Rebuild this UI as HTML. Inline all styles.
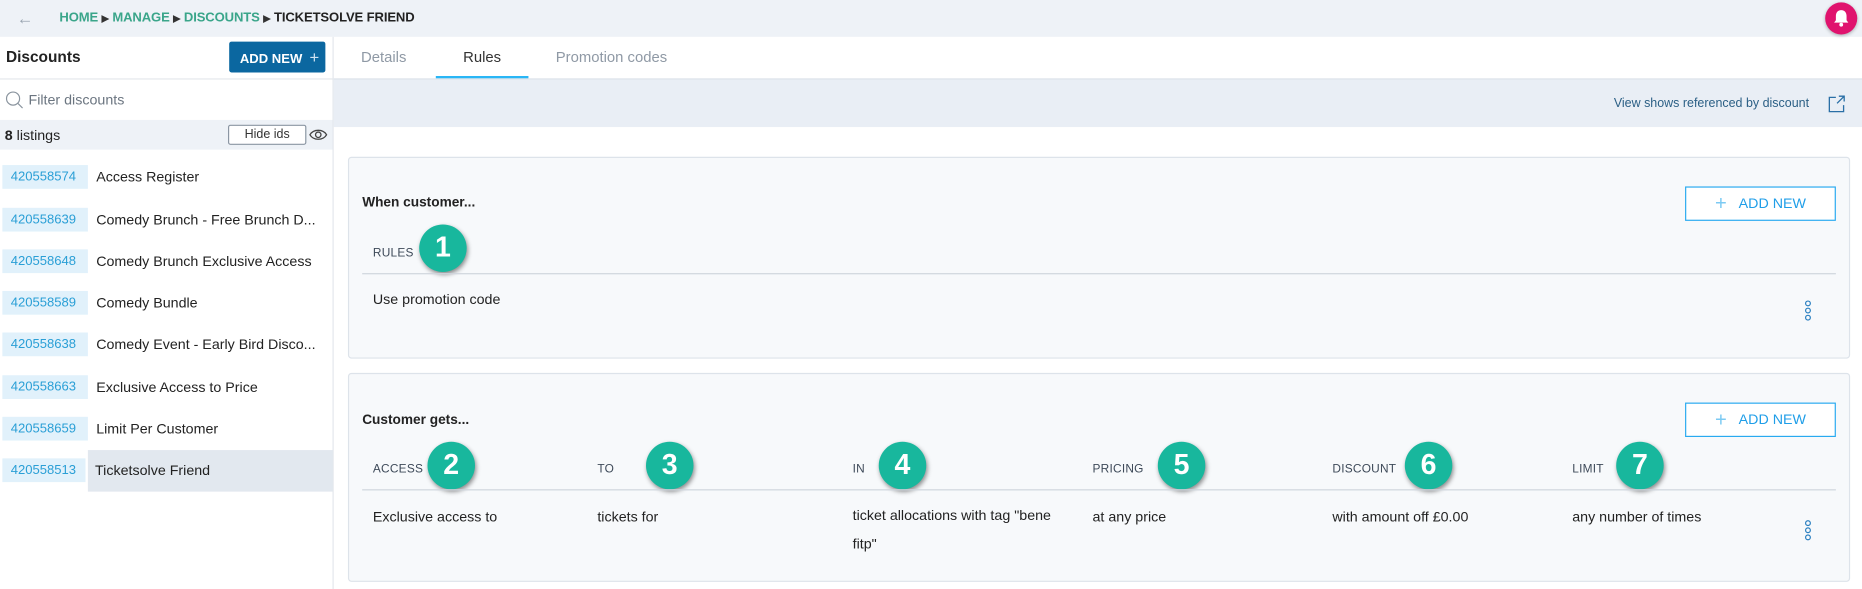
<!DOCTYPE html>
<html><head><meta charset="utf-8"><style>
*{box-sizing:border-box;margin:0;padding:0}
html,body{width:1862px;height:589px;overflow:hidden;background:#fff}
#s{position:absolute;left:0;top:0;width:1568px;height:496px;transform:scale(1.1875);transform-origin:0 0;font-family:"Liberation Sans",sans-serif;color:#222;font-size:12px}
.a{position:absolute;white-space:nowrap}
.bd{width:14px;font-size:10.5px;letter-spacing:-.2px;text-transform:uppercase}
.id{position:absolute;left:2px;width:72px;height:20px;background:#e1f1fb;color:#2a9fd6;font-size:11px;line-height:20px;padding-left:7px}
.nm{position:absolute;left:81px;font-size:12px;line-height:20px}
.card{position:absolute;left:293px;width:1265px;background:#f7f9fb;border:1px solid #dde3ea;border-radius:3px}
.btn{position:absolute;left:1419px;width:127px;height:29px;border:1.5px solid #29aaf0;background:#fff;color:#1f9ee8;font-size:12px;line-height:26px;text-align:center}
.lbl{position:absolute;font-size:10px;color:#3e4a59;letter-spacing:.2px}
.num{position:absolute;width:40px;height:40px;border-radius:50%;background:#18b79d;color:#fff;font-weight:bold;font-size:24px;line-height:40px;text-align:center;box-shadow:1px 2px 4px rgba(0,0,0,.45)}
.val{position:absolute;font-size:12px;color:#222}
.keb{position:absolute;width:6px}
.keb i{display:block;width:5px;height:5px;border:1.3px solid #2a7fc0;border-radius:50%;margin-bottom:1px}
</style></head><body><div id="s">
<div class="a" style="left:0;top:0;width:1568px;height:31px;background:#eef2f7"></div>
<div class="a" style="left:14px;top:7px;color:#9aa5b1;font-size:14px">←</div>
<div class="a" style="left:50px;top:9px;font-size:11px;font-weight:bold;color:#3aa58a;letter-spacing:-.1px">HOME <span style="color:#333;font-size:8px">▶</span> MANAGE <span style="color:#333;font-size:8px">▶</span> DISCOUNTS <span style="color:#333;font-size:8px">▶</span> <span style="color:#222">TICKETSOLVE FRIEND</span></div>
<div class="a" style="left:1537px;top:2px;width:27px;height:27px;border-radius:50%;background:#e0136e;box-shadow:0 1px 3px rgba(0,0,0,.3)"><svg width="27" height="27" viewBox="0 0 27 27"><path d="M13.5 6.5c-3 0-4.5 2.3-4.5 5v3.5l-1.5 2h12l-1.5-2v-3.5c0-2.7-1.5-5-4.5-5z" fill="#fff"/><circle cx="13.5" cy="18.8" r="1.6" fill="#fff"/></svg></div>
<!-- sidebar -->
<div class="a" style="left:280px;top:31px;width:1px;height:465px;background:#e3e7ec"></div>
<div class="a" style="left:5px;top:40px;font-size:13px;font-weight:bold">Discounts</div>
<div class="a" style="left:193px;top:35px;width:81px;height:26px;background:#0b67a0;border-radius:2px;color:#fff;font-size:11px;font-weight:bold;line-height:26px;padding-left:9px">ADD NEW <span style="font-weight:normal;font-size:14px;margin-left:3px;color:#cfe3f2">+</span></div>
<div class="a" style="left:0;top:66px;width:280px;height:1px;background:#e3e7ec"></div>
<svg class="a" style="left:4px;top:76px" width="16" height="16"><circle cx="7" cy="7" r="5.5" fill="none" stroke="#8a949e" stroke-width="1"/><path d="M11 11l4 4" stroke="#8a949e"/></svg>
<div class="a" style="left:24px;top:77px;color:#6b7580;font-size:12px">Filter discounts</div>
<div class="a" style="left:0;top:101px;width:280px;height:25px;background:#eef2f7"></div>
<div class="a" style="left:4px;top:107px;font-size:12px"><b>8</b> listings</div>
<div class="a" style="left:192px;top:105px;width:66px;height:17px;border:1px solid #8b96a3;border-radius:2px;background:#fff;font-size:10.5px;text-align:center;line-height:15px;color:#333">Hide ids</div>
<svg class="a" style="left:260px;top:107px" width="16" height="13"><path d="M1 6.5C4 1.5 12 1.5 15 6.5 12 11.5 4 11.5 1 6.5z" fill="none" stroke="#444" stroke-width="1.1"/><circle cx="8" cy="6.5" r="2.3" fill="none" stroke="#444" stroke-width="1.1"/></svg>
<div class="a" style="left:74px;top:379px;width:206px;height:35px;background:#e2e8ef"></div>
<div class="id" style="top:139px">420558574</div><div class="nm" style="top:139px">Access Register</div>
<div class="id" style="top:175px">420558639</div><div class="nm" style="top:175px">Comedy Brunch - Free Brunch D...</div>
<div class="id" style="top:210px">420558648</div><div class="nm" style="top:210px">Comedy Brunch Exclusive Access</div>
<div class="id" style="top:245px">420558589</div><div class="nm" style="top:245px">Comedy Bundle</div>
<div class="id" style="top:280px">420558638</div><div class="nm" style="top:280px">Comedy Event - Early Bird Disco...</div>
<div class="id" style="top:316px">420558663</div><div class="nm" style="top:316px">Exclusive Access to Price</div>
<div class="id" style="top:351px">420558659</div><div class="nm" style="top:351px">Limit Per Customer</div>
<div class="id" style="top:386px;width:70px">420558513</div><div class="nm" style="top:386px;left:80px">Ticketsolve Friend</div>
<!-- tabs -->
<div class="a" style="left:304px;top:41px;color:#8f99a5;font-size:12.5px">Details</div>
<div class="a" style="left:390px;top:41px;color:#333;font-size:12.5px">Rules</div>
<div class="a" style="left:468px;top:41px;color:#8f99a5;font-size:12.5px">Promotion codes</div>
<div class="a" style="left:367px;top:64px;width:78px;height:3px;background:#29b6f6"></div>
<div class="a" style="left:281px;top:66px;width:1287px;height:41px;background:#e9eef5;border-top:1px solid #dde3ea"></div>
<div class="a" style="left:1359px;top:81px;color:#2b5f85;font-size:10.5px">View shows referenced by discount</div>
<svg class="a" style="left:1539px;top:80px" width="15" height="15"><path d="M7 2H1.5v12h12V8.5" fill="none" stroke="#2a6fa6" stroke-width="1.1"/><path d="M8 7l6-6M9.5 1H14v4.5" fill="none" stroke="#2a6fa6" stroke-width="1.1"/></svg>
<!-- card 1 -->
<div class="card" style="top:132px;height:170px"></div>
<div class="a" style="left:305px;top:165px;font-weight:bold;font-size:11.5px">When customer...</div>
<div class="btn" style="top:157px"><span style="font-size:17px;color:#7ccaf3;vertical-align:-2px;margin-right:10px">+</span>ADD NEW</div>
<div class="lbl" style="left:314px;top:208px">RULES</div>
<div class="num" style="left:353px;top:189px">1</div>
<div class="a" style="left:305px;top:230px;width:1241px;height:1px;background:#cfd5dd"></div>
<div class="val" style="left:314px;top:245px">Use promotion code</div>
<div class="keb" style="left:1520px;top:253px"><i></i><i></i><i></i></div>
<!-- card 2 -->
<div class="card" style="top:314px;height:176px"></div>
<div class="a" style="left:305px;top:348px;font-weight:bold;font-size:11.5px">Customer gets...</div>
<div class="btn" style="top:339px"><span style="font-size:17px;color:#7ccaf3;vertical-align:-2px;margin-right:10px">+</span>ADD NEW</div>
<div class="lbl" style="left:314px;top:390px">ACCESS</div><div class="num" style="left:360px;top:372px">2</div>
<div class="lbl" style="left:503px;top:390px">TO</div><div class="num" style="left:544px;top:372px">3</div>
<div class="lbl" style="left:718px;top:390px">IN</div><div class="num" style="left:740px;top:372px">4</div>
<div class="lbl" style="left:920px;top:390px">PRICING</div><div class="num" style="left:975px;top:372px">5</div>
<div class="lbl" style="left:1122px;top:390px">DISCOUNT</div><div class="num" style="left:1183px;top:372px">6</div>
<div class="lbl" style="left:1324px;top:390px">LIMIT</div><div class="num" style="left:1361px;top:372px">7</div>
<div class="a" style="left:305px;top:412px;width:1241px;height:1px;background:#cfd5dd"></div>
<div class="val" style="left:314px;top:428px">Exclusive access to</div>
<div class="val" style="left:503px;top:428px">tickets for</div>
<div class="val" style="left:718px;top:428px;line-height:24px;top:422px">ticket allocations with tag "bene<br>fitp"</div>
<div class="val" style="left:920px;top:428px">at any price</div>
<div class="val" style="left:1122px;top:428px">with amount off £0.00</div>
<div class="val" style="left:1324px;top:428px">any number of times</div>
<div class="keb" style="left:1520px;top:438px"><i></i><i></i><i></i></div>
</div></body></html>
